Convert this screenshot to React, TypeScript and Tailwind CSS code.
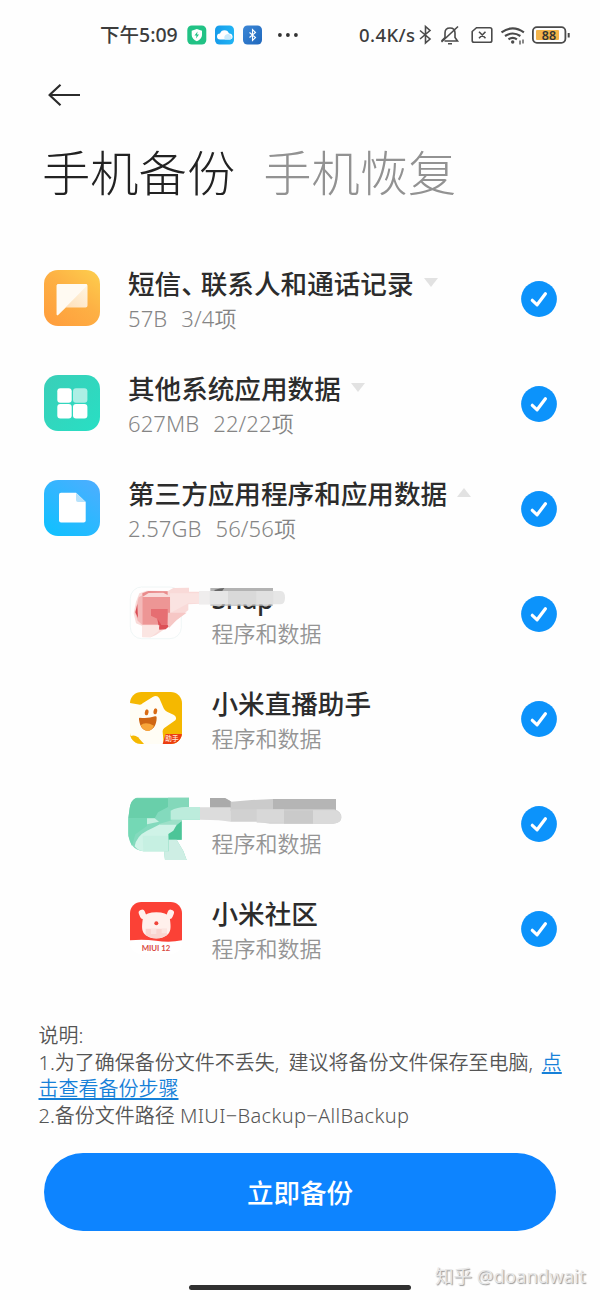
import type { ReactNode } from "react";

const SANS = "font-['Noto_Sans','Noto_Sans_CJK_SC',sans-serif]";

function StatusBar() {
  return (
    <div className="flex h-[70px] items-center pl-[100px] text-[#3c3c3c]">
      <span className="w-[87px] whitespace-nowrap text-[19.5px] font-medium leading-none">下午5:09</span>
      <svg className="h-5 w-[76px] shrink-0" viewBox="0 0 76 20">
        <defs>
          <linearGradient id="cloudBg" x1="0" y1="0" x2="1" y2="0">
            <stop offset="0" stopColor="#169bea" />
            <stop offset="1" stopColor="#20b4f4" />
          </linearGradient>
          <linearGradient id="btBg" x1="0" y1="0" x2="1" y2="1">
            <stop offset="0" stopColor="#3c87d6" />
            <stop offset="1" stopColor="#1f67bc" />
          </linearGradient>
        </defs>
        <rect x="0.3" y="0.5" width="19" height="19" rx="4.5" fill="#21c285" />
        <path d="M9.8 4 15 5.8V10c0 3-2.4 5-5.2 6.2C7 15 4.7 13 4.7 10V5.8Z" fill="#fff" />
        <path d="M10.6 6.5 7.5 10.5h2l-.5 3 3-4h-2Z" fill="#21c285" />
        <rect x="28" y="0.5" width="19" height="19" rx="4.5" fill="url(#cloudBg)" />
        <path d="M33 14.5a3 3 0 0 1 0-6 4.7 4.7 0 0 1 9 0 3 3 0 0 1 1 6Z" fill="#fff" />
        <path d="M38 14.5a3.5 3.5 0 0 1 5.5-4.3 2.5 2.5 0 0 1 0 4.3Z" fill="#c9eafb" />
        <rect x="56" y="0.5" width="19" height="19" rx="4.5" fill="url(#btBg)" />
        <path d="m62.5 7.5 6 5-3 3v-11l3 3-6 5" fill="none" stroke="#fff" strokeWidth="1.1" />
      </svg>
      <svg className="ml-[14px] h-2 w-[22px] shrink-0" viewBox="0 0 22 8" fill="#333">
        <circle cx="2.9" cy="4" r="1.9" />
        <circle cx="10.9" cy="4" r="1.9" />
        <circle cx="18.9" cy="4" r="1.9" />
      </svg>
      <span className="ml-[60px] w-[59px] whitespace-nowrap text-[18.5px] font-medium leading-none tracking-[0.4px]">0.4K/s</span>
      <svg className="h-6 w-[154px] shrink-0" viewBox="0 0 154 24" fill="none" stroke="#4a4a4a" strokeWidth="1.6">
        <path d="m2 7.500 10 8.500-4.500 4V3.500l4.500 4-10 8.500" />
        <path d="M26.500 18h13l-2.500-3.500V10c0-3-2-5-5-5s-5 2-5 5v4.500L23.500 18M30 20.800h4M40 3.500 23.500 19" />
        <path d="M58.500 4.700H72q1.800 0 1.800 1.800v11q0 1.800-1.800 1.800H56q-1.800 0-1.800-1.800V8.500ZM61 8.800l6.500 6.500M67.500 8.800 61 15.300" />
        <path d="M83.500 9.300q11.200-8 22.400 0M87 13q7.700-5 15.400 0M90.500 16.300q4.200-2.800 8.400 0" strokeWidth="2.2" />
        <circle cx="94.700" cy="19" r="1.7" fill="#4a4a4a" stroke="none" />
        <path d="M102 17.500v4M105 16.500v4" strokeWidth="1.3" />
        <rect x="114.900" y="4.200" width="32.500" height="15.600" rx="4" strokeWidth="1.8" />
        <rect x="118" y="7" width="23" height="10" rx="1" fill="#f4b44a" stroke="none" />
        <path d="M150.700 10v4.500" strokeWidth="2" />
        <text x="131" y="16.500" textAnchor="middle" fill="#333" stroke="none" className="text-[12.5px] font-semibold">88</text>
      </svg>
    </div>
  );
}

function MessageIcon() {
  return (
    <svg className="h-14 w-14" viewBox="0 0 56 56">
      <defs>
        <linearGradient id="msgBg" x1="1" y1="0" x2="0.2" y2="1">
          <stop offset="0" stopColor="#fdcf4d" />
          <stop offset="0.5" stopColor="#fdb044" />
          <stop offset="1" stopColor="#ff9f3d" />
        </linearGradient>
        <linearGradient id="msgFold" x1="0" y1="1" x2="1" y2="0">
          <stop offset="0" stopColor="#fff" stopOpacity="0.55" />
          <stop offset="1" stopColor="#fff" stopOpacity="0.85" />
        </linearGradient>
      </defs>
      <rect width="56" height="56" rx="14" fill="url(#msgBg)" />
      <path d="M14.500 14h27q2 0 2 2v19.500q0 2-2 2H22L14 45q-1.300 1-1.300-1V15.500q0-1.500 1.800-1.500Z" fill="url(#msgFold)" />
      <path d="M14.500 14h27q1.500 0 1.900 1.300L14 45q-1.300 1-1.300-1V15.500q0-1.500 1.800-1.500Z" fill="#fffaf2" />
    </svg>
  );
}

function GridIcon() {
  return (
    <svg className="h-14 w-14" viewBox="0 0 56 56" fill="#fff">
      <defs>
        <linearGradient id="gridBg" x1="0" y1="0" x2="1" y2="1">
          <stop offset="0" stopColor="#3acfb8" />
          <stop offset="1" stopColor="#28dfc4" />
        </linearGradient>
      </defs>
      <rect width="56" height="56" rx="14" fill="url(#gridBg)" />
      <rect x="13.300" y="13.300" width="14.400" height="14.400" rx="3" />
      <rect x="29" y="13.300" width="14.400" height="14.400" rx="3" opacity="0.6" />
      <rect x="13.300" y="29" width="14.400" height="14.400" rx="3" />
      <rect x="29" y="29" width="14.400" height="14.400" rx="3" />
    </svg>
  );
}

function FileIcon() {
  return (
    <svg className="h-14 w-14" viewBox="0 0 56 56">
      <defs>
        <linearGradient id="fileBg" x1="0.9" y1="0" x2="0.2" y2="1">
          <stop offset="0" stopColor="#4caeff" />
          <stop offset="1" stopColor="#12c0ff" />
        </linearGradient>
      </defs>
      <rect width="56" height="56" rx="14" fill="url(#fileBg)" />
      <path d="M17 12.700h15L41.700 22v18.500q0 2-2 2H17q-2 0-2-2V14.700q0-2 2-2Z" fill="#fff" />
      <path d="M32 12.700 41.700 22H34q-2 0-2-2Z" fill="#b6e2fc" />
    </svg>
  );
}

function StarIcon() {
  return (
    <svg className="ml-px h-[52px] w-[52px]" viewBox="58 50 156 156">
      <defs>
        <clipPath id="starClip"><rect x="58" y="50" width="156" height="156" rx="34" /></clipPath>
      </defs>
      <g clipPath="url(#starClip)">
        <rect x="58" y="50" width="156" height="156" fill="#f5b800" />
        <path d="M50 82 88 88q5 0 8-4l30-19q13-8 20 4l13 30q3 7 10 10l21 10q10 7 4 16l-33 23q-6 5-5 12l4 46H76L50 160Z" fill="#fffdf5" />
        <path d="M58 184q12-8 24 2l18 20H58Z" fill="#f5b800" />
        <ellipse cx="108" cy="111" rx="5.500" ry="9" fill="#d96c13" transform="rotate(10 108 111)" />
        <ellipse cx="134" cy="108" rx="5.500" ry="9" fill="#d96c13" transform="rotate(10 134 108)" />
        <path d="M87 127q24 4 46-4 5-1 5 4c0 24-12 38-27 39-14 0-23-12-26-33q-1-6 2-6Z" fill="#cf6714" />
        <path d="M90 150q13-13 40 1-7 15-19 16-13 0-21-17Z" fill="#f8a63a" />
        <path d="M165 176h49v30h-58Z" fill="#ec3c12" />
        <text x="164" y="198" fill="#ffe8d6" className="text-[20px] font-medium">助手</text>
      </g>
    </svg>
  );
}

function CommunityIcon() {
  return (
    <svg className="ml-px h-[52px] w-[52px]" viewBox="58 50 156 156">
      <defs>
        <clipPath id="comClip"><rect x="58" y="50" width="156" height="156" rx="34" /></clipPath>
      </defs>
      <g clipPath="url(#comClip)">
        <rect x="58" y="50" width="156" height="156" fill="#fff" />
        <path d="M58 50h156v115q-38 8-78 1-40-5-78-1Z" fill="#fb4136" />
      </g>
      <g fill="#fff0ec">
        <rect x="86" y="73" width="19" height="28" rx="9" transform="rotate(-22 95 87)" />
        <rect x="169" y="73" width="19" height="28" rx="9" transform="rotate(22 179 87)" />
        <path d="M97 96q10-15 40-15t40 15c3 22 6 40-5 51-17 17-53 17-70 0-11-11-8-29-5-51Z" />
      </g>
      <path d="M105 130h64v20q-32 18-64 0Z" fill="#f9d6d1" />
      <path d="M121 130h16v16h-16ZM153 130h16v14h-16Z" fill="#fbe4e0" />
      <circle cx="137" cy="114" r="6" fill="#f0443a" />
      <text x="136" y="197" textAnchor="middle" textLength="86" lengthAdjust="spacingAndGlyphs" fill="#d84a42" className="font-['Lato'] text-[25px] font-bold">MIUI 12</text>
    </svg>
  );
}

function RedSmudge() {
  return (
    <svg className="absolute left-0 top-0 h-[105px] w-[600px]" viewBox="0 0 1800 315">
      <g transform="translate(90 -285)">
        <rect x="301" y="366" width="153" height="155" rx="34" fill="#fffefe" stroke="#e9f1f1" strokeWidth="2" />
        <path d="M328 385 350 377 414 378 430 369 477 368 477 380 508 380 508 416 475 418 475 435 440 465 410 488 378 510 362 517 337 516 337 483 318 475 311 445 318 410Z" fill="#f9dad8" />
        <path d="M337 385 355 378 413 379 413 390 400 383 356 384 337 396Z" fill="#e98b8b" />
        <path d="M326 397 337 391V480L323 467 315 443Z" fill="#f3b9b8" />
        <path d="M322 417 316 442 324 459 323 440Z" fill="#d94b53" />
        <rect x="337" y="396" width="83" height="83" fill="#ed9695" />
        <path d="M363 432h50v47h-27l-4-18-19-9Z" fill="#e66e72" />
        <path d="M382 461 394 479H422L407 493 388 494Z" fill="#dc5056" />
        <path d="M420 385h87v30h-32l-53 28Z" fill="#fae3e1" />
        <path d="M414 443h56l-30 22-23 24-4-10Z" fill="#f6c7c5" />
        <path d="M337 481h51l-2 17-24 19h-25Z" fill="#fbe5e2" />
        <path d="M541 369H729V381H541Z" fill="#b3b3b3" />
        <path d="M541 388q14-19 42-19l-10 14Z" fill="#666" />
        <path d="M541 415H729V423H541Z" fill="#b8b8b8" opacity="0.7" />
        <path d="M507 378H752q13 0 13 20t-15 20H507Z" fill="#e6e6e6" />
        <path d="M507 378h32v40h-32Z" fill="#efeded" />
        <path d="M594 378h86v40h-86Z" fill="#d9d9d9" />
        <path d="M680 378h50v40h-50Z" fill="#e0e0e0" />
      </g>
    </svg>
  );
}

function GreenSmudge() {
  return (
    <svg className="absolute left-0 top-0 h-[105px] w-[600px]" viewBox="0 0 1800 315">
      <g transform="translate(330 -285)">
        <path d="M80 368H237V397H270V434H215V494H200L220 528 230 555H165L162 529H100Q78 526 68 513 57 503 55 475V430L59 400Q64 374 80 368Z" fill="#83dabd" />
        <path d="M76 370h98v26l-30 16-10 18H55l4-30q3-24 17-30Z" fill="#69cfaa" />
        <path d="M55 430h56v23L76 478l-10 35-11-30Z" fill="#74d8b5" />
        <path d="M174 368h63v28l-55 8-8-8Z" fill="#83d8ba" />
        <path d="M174 473 215 438V494H176Z" fill="#4dc598" />
        <path d="M147 447 190 434H215V438L176 466 147 458Z" fill="#9de0c8" />
        <path d="M111 430h23l13 10-36 8Z" fill="#c6f0e1" />
        <path d="M147 449h53l-10 18-15 10v52h-75q-16-2-26-15 5-31 37-47 17-8 36-18Z" fill="#cff3e7" />
        <path d="M98 482h76v47h-74Z" fill="#c6f0e2" />
        <path d="M176 494h24l20 34 10 27h-65l-3-26h14Z" fill="#ceeee4" />
        <path d="M182 407q20-11 44-11h44v38h-88Z" fill="#bcecdc" />
        <path d="M300 369h45l20 11 60-5 64-3h189v35H300Z" fill="#cbcbcb" />
        <path d="M300 369h45l17 10v20H300Z" fill="#aaa" />
        <path d="M489 372h189v34H489Z" fill="#b5b5b5" />
        <path d="M270 397h92l-1 43q-26-6-91-6Z" fill="#dcdcdc" />
        <path d="M361 403H673q21 6 21 24t-24 19H480l-40-6h-79Z" fill="#d1d1d1" />
        <path d="M440 403h82v40h-82Z" fill="#d8d8d8" />
        <path d="M522 406h87v40h-87Z" fill="#cacaca" />
        <path d="M609 406h65q20 7 20 22t-25 18h-60Z" fill="#dadada" />
      </g>
    </svg>
  );
}

function Check() {
  return (
    <svg className="mt-[2px] h-9 w-9 shrink-0" viewBox="0 0 36 36">
      <circle cx="18" cy="18" r="17.900" fill="#0c93fb" />
      <path d="m11.300 19.300 4.800 4.500 8.300-11" fill="none" stroke="#fff" strokeWidth="3.2" strokeLinecap="round" strokeLinejoin="round" />
    </svg>
  );
}

function Arrow({ up }: { up?: boolean }) {
  return (
    <svg className="ml-[10px] mt-[-3px] h-[9px] w-3.5" viewBox="0 0 14 9" fill="#e2e2e2">
      <path d={up ? "M0 9 7 0l7 9Z" : "M0 0h14L7 9Z"} />
    </svg>
  );
}

function CategoryRow({ icon, title, size, count, up }: { icon: ReactNode; title: ReactNode; size: string; count: string; up?: boolean }) {
  return (
    <div className="flex h-[105px] items-center pl-11 pr-[43px]">
      <div className="w-[84px] pt-px">{icon}</div>
      <div className="flex-1 pt-[5px]">
        <div className="flex h-[35px] items-center whitespace-nowrap text-[26.6px] font-medium leading-[35px] text-[#2c2c2c]">
          {title}
          <Arrow up={up} />
        </div>
        <div className="flex h-8 gap-[14px] whitespace-nowrap text-[22px] font-[350] leading-8 tracking-[0.1px] text-[#858585]">
          <span>{size}</span>
          <span>{count}</span>
        </div>
      </div>
      <Check />
    </div>
  );
}

function AppRow({ icon, title, overlay }: { icon?: ReactNode; title: ReactNode; overlay?: ReactNode }) {
  return (
    <div className="relative flex h-[105px] items-center pl-[129px] pr-[43px]">
      <div className="w-[82.5px]">{icon}</div>
      <div className="flex-1 pt-[5px]">
        <div className="h-[35px] whitespace-nowrap text-[26.6px] font-medium leading-[35px] text-[#2c2c2c]">{title}</div>
        <div className="h-8 whitespace-nowrap text-[22px] font-[350] leading-8 text-[#949494]">程序和数据</div>
      </div>
      <Check />
      {overlay}
    </div>
  );
}

export default function App() {
  return (
    <main className={`flex h-[1300px] w-[600px] flex-col overflow-hidden bg-[#fefefe] ${SANS}`}>
      <StatusBar />
      <div className="flex h-[50px] items-center pl-12">
        <svg className="h-6 w-8" viewBox="0 0 32 24" fill="none" stroke="#2b2b2b" strokeWidth="2.2" strokeLinejoin="round">
          <path d="M32 12H2M12.500 1.800 1.500 12l11 10.200" />
        </svg>
      </div>
      <div className="flex h-[125px] gap-[28px] whitespace-nowrap pl-[42px] pt-[17px] text-[48.3px] font-light leading-[70px]">
        <span className="text-[#222]">手机备份</span>
        <span className="text-[#929292]">手机恢复</span>
      </div>
      <CategoryRow
        icon={<MessageIcon />}
        title={<span>短信<span className="mr-[6.3px] [font-feature-settings:'halt']">、</span>联系人和通话记录</span>}
        size="57B"
        count="3/4项"
      />
      <CategoryRow icon={<GridIcon />} title="其他系统应用数据" size="627MB" count="22/22项" />
      <CategoryRow icon={<FileIcon />} title="第三方应用程序和应用数据" size="2.57GB" count="56/56项" up />
      <AppRow title={<span className="tracking-[-0.3px]">Snap</span>} overlay={<RedSmudge />} />
      <AppRow icon={<StarIcon />} title="小米直播助手" />
      <AppRow title="" overlay={<GreenSmudge />} />
      <AppRow icon={<CommunityIcon />} title="小米社区" />
      <div className="h-[133px] whitespace-nowrap pl-[38.5px] pt-[43px] text-[20px] font-[350] leading-[26.7px] text-[#555]">
        <p>说明:</p>
        <p>1.为了确保备份文件不丢失<span className="mr-[4px]">,</span> 建议将备份文件保存至电脑<span className="mr-[3.5px]">,</span> <a className="text-[#1680d8] underline underline-offset-2">点</a></p>
        <p><a className="text-[#1680d8] underline underline-offset-2">击查看备份步骤</a></p>
        <p>2.备份文件路径 <span className="tracking-[0.35px]">MIUI−Backup−AllBackup</span></p>
      </div>
      <button className="ml-11 mt-10 flex h-[78px] w-[512px] shrink-0 items-center justify-center rounded-full bg-[#0d84ff] pt-[4px] text-[26.5px] font-medium text-white">
        立即备份
      </button>
      <div className="flex h-[69px] items-end pl-[189px]">
        <div className="mb-[10px] h-[5px] w-[222px] rounded-full bg-[#303030]" />
        <span className="mb-[10px] ml-6 whitespace-nowrap text-[18.5px] leading-[28px] text-[#e8e8e8] [text-shadow:1px_1px_1px_#999]">知乎 @doandwait</span>
      </div>
    </main>
  );
}
